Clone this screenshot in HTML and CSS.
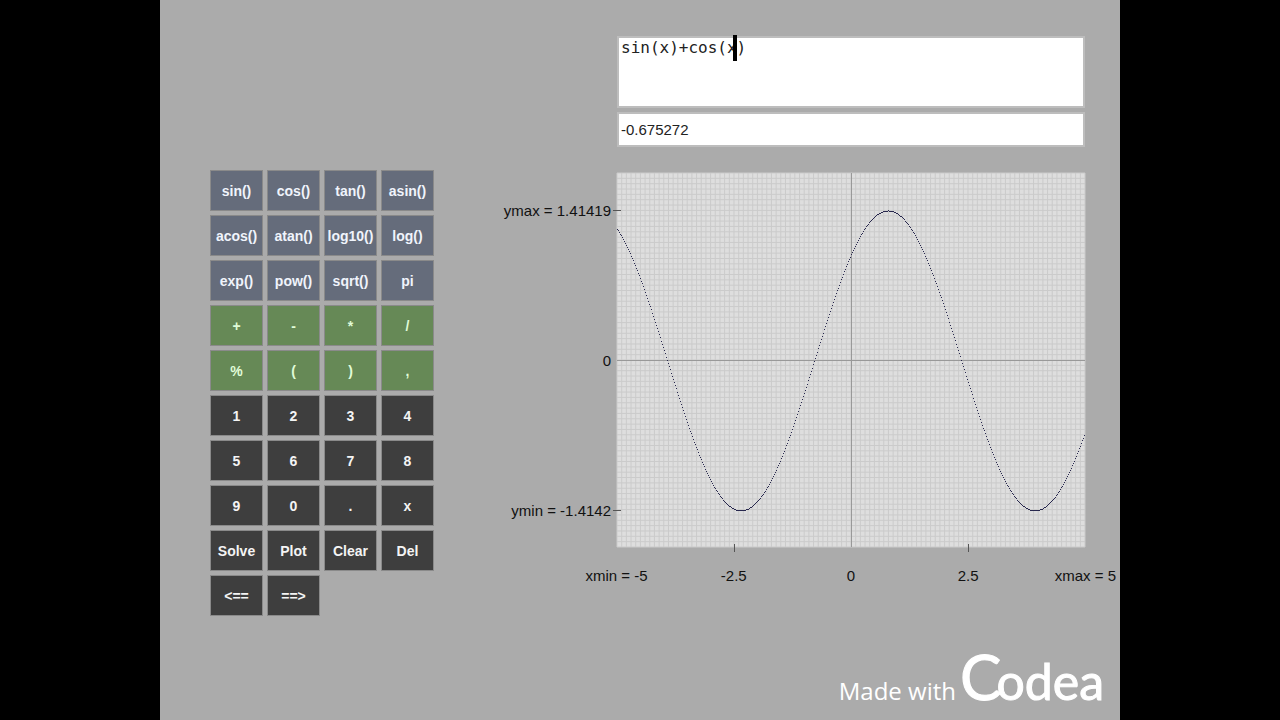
FILE: index.html
```html
<!DOCTYPE html>
<html lang="en">
<head>
<meta charset="utf-8">
<title>Graphing Calculator</title>
<link rel="stylesheet" href="styles.css">
</head>
<body>
<main class="app">
  <section class="keypad" aria-label="Keypad">
    <button class="key fn">sin()</button><button class="key fn">cos()</button><button class="key fn">tan()</button><button class="key fn">asin()</button>
    <button class="key fn">acos()</button><button class="key fn">atan()</button><button class="key fn">log10()</button><button class="key fn">log()</button>
    <button class="key fn">exp()</button><button class="key fn">pow()</button><button class="key fn">sqrt()</button><button class="key fn">pi</button>
    <button class="key op">+</button><button class="key op">-</button><button class="key op">*</button><button class="key op">/</button>
    <button class="key op">%</button><button class="key op">(</button><button class="key op">)</button><button class="key op">,</button>
    <button class="key">1</button><button class="key">2</button><button class="key">3</button><button class="key">4</button>
    <button class="key">5</button><button class="key">6</button><button class="key">7</button><button class="key">8</button>
    <button class="key">9</button><button class="key">0</button><button class="key">.</button><button class="key">x</button>
    <button class="key">Solve</button><button class="key">Plot</button><button class="key">Clear</button><button class="key">Del</button>
    <button class="key">&lt;==</button><button class="key">==&gt;</button>
  </section>

  <section class="work">
    <div class="fields">
      <div class="editor">
        <textarea class="field expression" aria-label="Expression" spellcheck="false">sin(x)+cos(x)</textarea>
        <span class="cursor"></span>
      </div>
      <input class="field result" aria-label="Result" value="-0.675272" readonly>
    </div>

    <div class="chart">
      <div class="y-labels">
        <span>ymax = 1.41419</span>
        <span>0</span>
        <span>ymin = -1.4142</span>
      </div>
      <svg class="plot" viewBox="0 0 468 374" role="img" aria-label="Plot of sin(x)+cos(x)">
        <rect class="paper" width="468" height="374"/>
        <path class="grid" id="grid"/>
        <path class="axis" d="M0 187.5H468M234.5 0V374"/>
        <path class="tick" d="M-4 37.5H4M-4 337.5H4M117.5 371V379M351.5 371V379"/>
        <path class="curve" id="curve"/>
      </svg>
      <div class="x-labels">
        <span>xmin = -5</span>
        <span>-2.5</span>
        <span>0</span>
        <span>2.5</span>
        <span>xmax = 5</span>
      </div>
    </div>

    <footer class="brand"><span class="made">Made with</span><span class="name"><span class="initial">C</span>odea</span></footer>
  </section>
</main>
<script src="plot.js"></script>
</body>
</html>
```

FILE: plot.js
```js
const W = 468, H = 374;

let grid = "";
for (let i = 0; i <= 100; i++) {
  grid += `M${(i * W / 100).toFixed(2)} 0V${H}`;
}
for (let i = 0; i <= 70; i++) {
  grid += `M0 ${(i * H / 70).toFixed(2)}H${W}`;
}
document.getElementById("grid").setAttribute("d", grid);

/* one dot for each pixel column */
let dots = "";
for (let px = 0; px < W; px++) {
  const x = px / W * 10 - 5;
  const y = Math.round(187.4 - 106 * (Math.sin(x) + Math.cos(x)));
  dots += `M${px} ${y}h1v1h-1z`;
}
document.getElementById("curve").setAttribute("d", dots);
```

FILE: styles.css
```css
* {
  box-sizing: border-box;
}

body {
  margin: 0;
  background: #000;
  color: #111;
  font: 15px/20px "Liberation Sans", Arial, sans-serif;
}

.app {
  display: flex;
  justify-content: space-between;
  align-items: flex-start;
  max-width: 960px;
  min-height: 100vh;
  margin: 0 auto;
  padding: 36px 35px 0 50px;
  background: #ababab;
}

.keypad {
  display: grid;
  grid-template-columns: repeat(4, 53px);
  grid-auto-rows: 41px;
  gap: 4px;
  margin-top: 134px;
}

.key {
  padding: 0;
  border: 1px solid #8a8a8a;
  background: #3e3e3e;
  color: #f4f4f4;
  font: bold 14px/20px "Liberation Sans", Arial, sans-serif;
}

.fn {
  background: #656c7b;
  color: #f0f4fc;
}

.op {
  background: #668956;
  color: #e0fcd8;
}

.work {
  width: 581px;
}

.fields {
  display: flex;
  flex-direction: column;
  gap: 4px;
  margin-left: 113px;
}

.editor {
  position: relative;
  display: flex;
}

.field {
  display: block;
  width: 100%;
  margin: 0;
  border: 2px solid #bdbdbd;
  border-radius: 0;
  outline: 0;
  background: #fff;
  color: #222;
}

.expression {
  height: 72px;
  padding: 0 2px;
  resize: none;
  font: 16px/20px "DejaVu Sans Mono", "Liberation Mono", monospace;
}

.cursor {
  position: absolute;
  top: -1px;
  left: 116px;
  width: 4px;
  height: 26px;
  background: #000;
}

.result {
  height: 35px;
  padding: 0 2px;
  font: 15px/20px "Liberation Sans", Arial, sans-serif;
}

.chart {
  display: grid;
  grid-template-columns: 113px 1fr;
  row-gap: 19px;
  margin-top: 26px;
}

.y-labels {
  display: flex;
  flex-direction: column;
  justify-content: space-between;
  align-items: flex-end;
  padding: 28px 6px 26px 0;
  white-space: nowrap;
}

.plot {
  display: block;
  width: 100%;
  overflow: visible;
}

.paper {
  fill: #dedede;
}

.grid {
  fill: none;
  stroke: #cbcbcb;
  stroke-width: 1;
}

.axis {
  fill: none;
  stroke: #999;
}

.tick {
  fill: none;
  stroke: #555;
}

.curve {
  fill: #28284e;
}

.x-labels {
  display: grid;
  grid-column: 2;
  grid-template-columns: repeat(5, 1fr);
  margin: 0 -59px;
  text-align: center;
}

.brand {
  display: flex;
  justify-content: flex-end;
  align-items: baseline;
  gap: 4px;
  margin: 58px -19px 0 0;
  color: #fff;
  font-family: Lato, "Open Sans", sans-serif;
  white-space: nowrap;
}

.made {
  font: 24px/28px "Open Sans", sans-serif;
}

.name {
  font-size: 50px;
  line-height: 64px;
  -webkit-text-stroke: 1px #fff;
}

.initial {
  margin-right: -5px;
  font-size: 62px;
}
```
